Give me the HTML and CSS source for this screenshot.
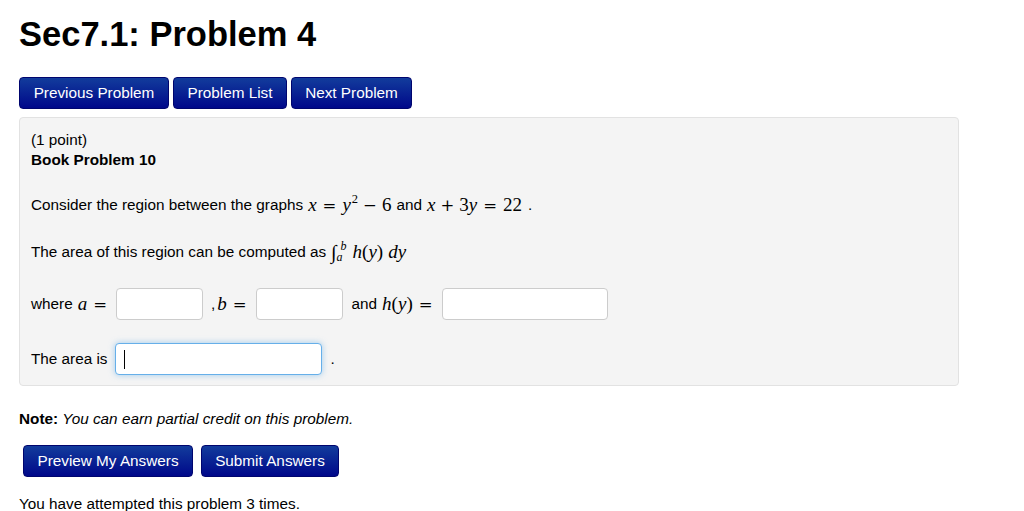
FILE: index.html
```html
<!DOCTYPE html>
<html>
<head>
<meta charset="utf-8">
<title>Sec7.1: Problem 4</title>
<link rel="stylesheet" href="styles.css">
</head>
<body>
<div class="page">
  <h1 class="title">Sec7.1: Problem 4</h1>
  <div class="nav">
    <button class="btn btn-prev">Previous Problem</button>
    <button class="btn btn-list">Problem List</button>
    <button class="btn btn-next">Next Problem</button>
  </div>
  <div class="well">
    <div class="row r-point">(1 point)</div>
    <div class="row r-book"><b>Book Problem 10</b></div>
    <div class="row r-consider">
      <span>Consider the region between the graphs</span>
      <span class="math m1"><i>x</i><span class="op rel">=</span><i>y</i><sup>2</sup><span class="op bin">−</span>6</span>
      <span class="txt-and">and</span>
      <span class="math m2"><i>x</i><span class="op bin">+</span>3<i>y</i><span class="op rel">=</span>22</span>
      <span class="dot">.</span>
    </div>
    <div class="row r-area">
      <span>The area of this region can be computed as</span>
      <span class="math m3"><span class="int">∫</span><span class="limits"><i class="up">b</i><i class="low">a</i></span><i>h</i>(<i>y</i>)<span class="thin"></span><i>d</i><i>y</i></span>
    </div>
    <div class="row r-where">
      <span>where</span>
      <span class="math ma"><i>a</i><span class="op rel rel-end">=</span></span>
      <div class="field f-small"></div>
      <span class="comma">,</span>
      <span class="math mb"><i>b</i><span class="op rel rel-end">=</span></span>
      <div class="field f-small"></div>
      <span class="txt-and2">and</span>
      <span class="math mh"><i>h</i>(<i>y</i>)<span class="op rel rel-end">=</span></span>
      <div class="field f-wide"></div>
    </div>
    <div class="row r-total">
      <span>The area is</span>
      <div class="field f-area focused"><span class="caret"></span></div>
      <span class="dot2">.</span>
    </div>
  </div>
  <p class="note"><b>Note:</b> <i>You can earn partial credit on this problem.</i></p>
  <div class="actions">
    <button class="btn btn-preview">Preview My Answers</button>
    <button class="btn btn-submit">Submit Answers</button>
  </div>
  <p class="attempts">You have attempted this problem 3 times.</p>
</div>
</body>
</html>
```

FILE: styles.css
```css
html, body {
  margin: 0;
  padding: 0;
  background: #ffffff;
}
body {
  font-family: "Liberation Sans", Arial, sans-serif;
  color: #000;
}
.page {
  padding: 12px 0 0 19px;
  width: 939px;
}
.title {
  margin: 0;
  font-size: 34.5px;
  line-height: 44px;
  font-weight: bold;
  color: #000;
}
.nav {
  margin-top: 21px;
  display: flex;
  gap: 4px;
}
.btn {
  box-sizing: border-box;
  height: 32px;
  padding: 0;
  border: 1px solid #00056e;
  border-radius: 4px;
  background: linear-gradient(to bottom, #123c9c 0%, #00088a 100%);
  color: #fff;
  font-family: "Liberation Sans", Arial, sans-serif;
  font-size: 15.3px;
  line-height: 30px;
  text-align: center;
  cursor: pointer;
}
.btn-prev { width: 150px; }
.btn-list { width: 114px; }
.btn-next { width: 121px; }

.well {
  margin-top: 8px;
  box-sizing: border-box;
  width: 940px;
  background: #f4f4f4;
  border: 1px solid #e2e2e2;
  border-radius: 4px;
  padding: 12px 11px 10px 11px;
  font-size: 15.3px;
}
.row {
  display: flex;
  align-items: center;
  white-space: nowrap;
}
.r-point, .r-book { height: 20px; }
.r-consider { height: 24px; margin-top: 23px; }
.r-area { height: 28px; margin-top: 21px; }
.r-where { height: 32px; margin-top: 22px; }
.r-total { height: 32px; margin-top: 23px; }

.math {
  font-family: "Liberation Serif", "Times New Roman", serif;
  font-size: 19px;
  display: inline-flex;
  align-items: baseline;
}
.math i { font-style: italic; }
.math sup {
  font-size: 12.5px;
  line-height: 1;
  align-self: flex-start;
  margin-top: -1px;
  margin-left: 1px;
}
.op {
  font-family: "DejaVu Serif", serif;
  font-size: 16.5px;
}
.rel { margin: 0 6px; }
.bin { margin: 0 5px; }
.rel-end { margin-right: 0; }
.m1 { margin-left: 5px; }
.txt-and { margin-left: 5px; }
.m2 { margin-left: 5px; }
.dot { margin-left: 6px; }

.m3 { margin-left: 5px; align-items: center; }
.int { font-size: 20px; font-style: italic; margin-right: 1px; }
.limits {
  display: inline-flex;
  flex-direction: column;
  font-size: 12px;
  line-height: 11px;
  margin-right: 6px;
}
.limits .up { margin-top: -6px; margin-left: 3px; }
.limits .low { margin-left: -1px; margin-bottom: -6px; }
.thin { width: 5px; }

.ma { margin-left: 5px; }
.mb { margin-left: 2px; }
.mh { margin-left: 5px; }
.comma { margin-left: 8px; }
.txt-and2 { margin-left: 9px; }

.field {
  box-sizing: border-box;
  height: 32px;
  background: #fff;
  border: 1px solid #cccccc;
  border-radius: 4px;
  margin-left: 9px;
  position: relative;
}
.f-small { width: 87px; }
.f-wide { width: 166px; }
.f-area {
  width: 207px;
  margin-left: 7px;
}
.focused {
  border-color: #66afe9;
  box-shadow: 0 0 6px rgba(102, 175, 233, 0.6);
}
.caret {
  position: absolute;
  left: 8px;
  top: 6px;
  width: 1px;
  height: 19px;
  background: #000;
}
.dot2 { margin-left: 9px; }

.note {
  margin: 23px 0 0 0;
  font-size: 15.3px;
  line-height: 20px;
}
.actions {
  margin-top: 16px;
  margin-left: 4px;
  display: flex;
  gap: 8px;
}
.btn-preview { width: 170px; }
.btn-submit { width: 138px; }
.attempts {
  margin: 17px 0 0 0;
  font-size: 15.3px;
  line-height: 20px;
}
```
